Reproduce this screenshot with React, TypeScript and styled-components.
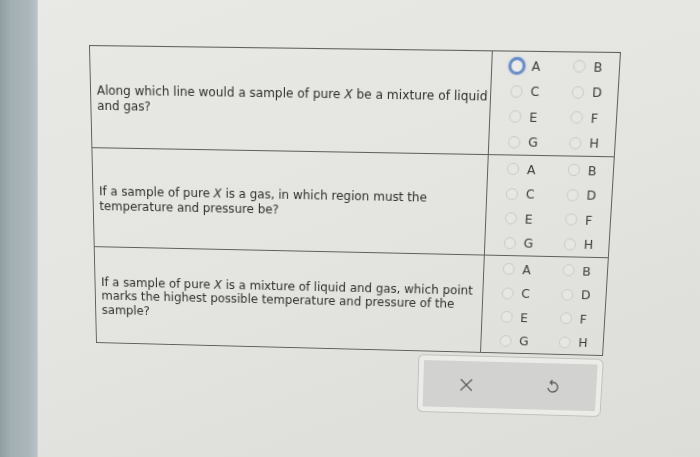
import styled, { createGlobalStyle } from 'styled-components'

const GlobalStyle = createGlobalStyle`
  html, body { margin: 0; padding: 0; }
  body {
    background: #e4e4e0;
    font-family: "DejaVu Sans", Verdana, sans-serif;
    color: #333;
  }
`

type Question = { text: React.ReactNode; focused?: boolean }

const QUESTIONS: Question[] = [
  {
    text: <>Along which line would a sample of pure <i>X</i> be a mixture of liquid and gas?</>,
    focused: true,
  },
  {
    text: <>If a sample of pure <i>X</i> is a gas, in which region must the temperature and pressure be?</>,
  },
  {
    text: <>If a sample of pure <i>X</i> is a mixture of liquid and gas, which point marks the highest possible temperature and pressure of the sample?</>,
  },
]

const LETTERS = ['A', 'B', 'C', 'D', 'E', 'F', 'G', 'H']

// The screen was photographed at a slight angle: the flat table rectangle
// is mapped onto the quad it occupies in the photo.
const STRIP_W = 37
const FLAT = { x: 51, y: 45, w: 532, h: 301 }
const QUAD: [number, number][] = [
  [88, 45],
  [620, 52],
  [602, 356],
  [95, 343],
]

function quadTransform() {
  const [[x0, y0], [x1, y1], [x2, y2], [x3, y3]] = QUAD.map(([x, y]) => [x - STRIP_W, y])
  const dx1 = x1 - x2, dx2 = x3 - x2, sx = x0 - x1 + x2 - x3
  const dy1 = y1 - y2, dy2 = y3 - y2, sy = y0 - y1 + y2 - y3
  const den = dx1 * dy2 - dx2 * dy1
  const g = (sx * dy2 - dx2 * sy) / den
  const h = (dx1 * sy - sx * dy1) / den
  const a = x1 - x0 + g * x1, b = x3 - x0 + h * x3, c = x0
  const d = y1 - y0 + g * y1, e = y3 - y0 + h * y3, f = y0
  const { x: rx, y: ry, w: W, h: H } = FLAT
  const m = [
    a / W, b / H, c - (a * rx) / W - (b * ry) / H,
    d / W, e / H, f - (d * rx) / W - (e * ry) / H,
    g / W, h / H, 1 - (g * rx) / W - (h * ry) / H,
  ]
  const n = m.map(v => v / m[8])
  return `matrix3d(${n[0]}, ${n[3]}, 0, ${n[6]}, ${n[1]}, ${n[4]}, 0, ${n[7]}, 0, 0, 1, 0, ${n[2]}, ${n[5]}, 0, 1)`
}

const Page = styled.div`
  display: flex;
  width: 700px;
  height: 457px;
  overflow: hidden;
  background: linear-gradient(160deg, #e9e9e5 0%, #e4e4e0 50%, #dcdcd8 100%);
`

const Strip = styled.div`
  width: ${STRIP_W}px;
  flex-shrink: 0;
  background: linear-gradient(90deg, #8f9ea2 0%, #a2afb3 30%, #abb7ba 80%, #b9c3c4 100%);
  border-right: 1px solid #c9cfce;
`

const Stage = styled.div`
  flex: 1;
  height: 457px;
  box-sizing: border-box;
  padding: ${FLAT.y}px 0 0 ${FLAT.x}px;
  display: flex;
  flex-direction: column;
  transform-origin: 0 0;
`

const Table = styled.div`
  width: ${FLAT.w}px;
  box-sizing: border-box;
  border: 1px solid #5e5e5e;
  display: flex;
  flex-direction: column;
`

const Row = styled.div<{ $last?: boolean }>`
  height: 99px;
  display: grid;
  grid-template-columns: 405px 1fr;
  border-bottom: ${p => (p.$last ? 'none' : '1px solid #5e5e5e')};
`

const QuestionCell = styled.div`
  display: flex;
  align-items: center;
  padding: 2px 0 0 6px;
  font-size: 12.25px;
  line-height: 14.5px;
  color: #2f2f2f;
  border-right: 1px solid #5e5e5e;
`

const Options = styled.div`
  display: grid;
  grid-template-columns: 61px 61px;
  grid-auto-rows: 24.5px;
  padding: 1px 0 0 19px;
  overflow: hidden;
`

const Option = styled.label`
  display: flex;
  align-items: center;
  gap: 8px;
  font-size: 12.5px;
  color: #3a3a3a;
`

const Radio = styled.span<{ $focused?: boolean }>`
  box-sizing: border-box;
  width: 12px;
  height: 12px;
  border-radius: 50%;
  flex-shrink: 0;
  border: 1px solid #c9c9c6;
  background: #e6e6e3;
  ${p =>
    p.$focused &&
    `
    width: 17px;
    height: 17px;
    margin: 0 -2px 0 -3px;
    border: 3px solid #6a8fc8;
    background: #ebebe9;
    box-shadow: 0 0 2px #a3b8d8;
  `}
`

const Actions = styled.div`
  margin: 4px 0 0 342px;
  width: 190px;
  height: 59px;
  box-sizing: border-box;
  border: 5px solid #ebebe8;
  border-radius: 5px;
  background: #d2d3d1;
  box-shadow: 0 0 0 1px #c0c1bf;
  display: grid;
  grid-template-columns: 1fr 1fr;
  align-items: center;
  justify-items: center;
`

const IconButton = styled.button`
  border: none;
  background: transparent;
  padding: 0;
  display: flex;
  color: #5a5a5a;
  cursor: pointer;
`

function CloseIcon() {
  return (
    <svg width="14" height="14" viewBox="0 0 14 14" fill="none" stroke="currentColor" strokeWidth="1.3" strokeLinecap="round">
      <path d="M1.5 1.5l11 11M12.5 1.5l-11 11" />
    </svg>
  )
}

function UndoIcon() {
  return (
    <svg width="14" height="17" viewBox="0 0 14 17" fill="none" stroke="currentColor" strokeWidth="1.4" strokeLinecap="round" strokeLinejoin="round">
      <path d="M4.3 4H7a5 5 0 1 1-4.8 6.4" />
      <path d="M6 2L4.3 4l1.7 2" />
    </svg>
  )
}

export default function App() {
  return (
    <>
      <GlobalStyle />
      <Page>
        <Strip />
        <Stage style={{ transform: quadTransform() }}>
          <Table>
            {QUESTIONS.map((q, i) => (
              <Row key={i} $last={i === QUESTIONS.length - 1}>
                <QuestionCell>
                  <span>{q.text}</span>
                </QuestionCell>
                <Options>
                  {LETTERS.map((l, j) => (
                    <Option key={l}>
                      <Radio $focused={q.focused && j === 0} />
                      {l}
                    </Option>
                  ))}
                </Options>
              </Row>
            ))}
          </Table>
          <Actions>
            <IconButton aria-label="Clear">
              <CloseIcon />
            </IconButton>
            <IconButton aria-label="Undo">
              <UndoIcon />
            </IconButton>
          </Actions>
        </Stage>
      </Page>
    </>
  )
}
